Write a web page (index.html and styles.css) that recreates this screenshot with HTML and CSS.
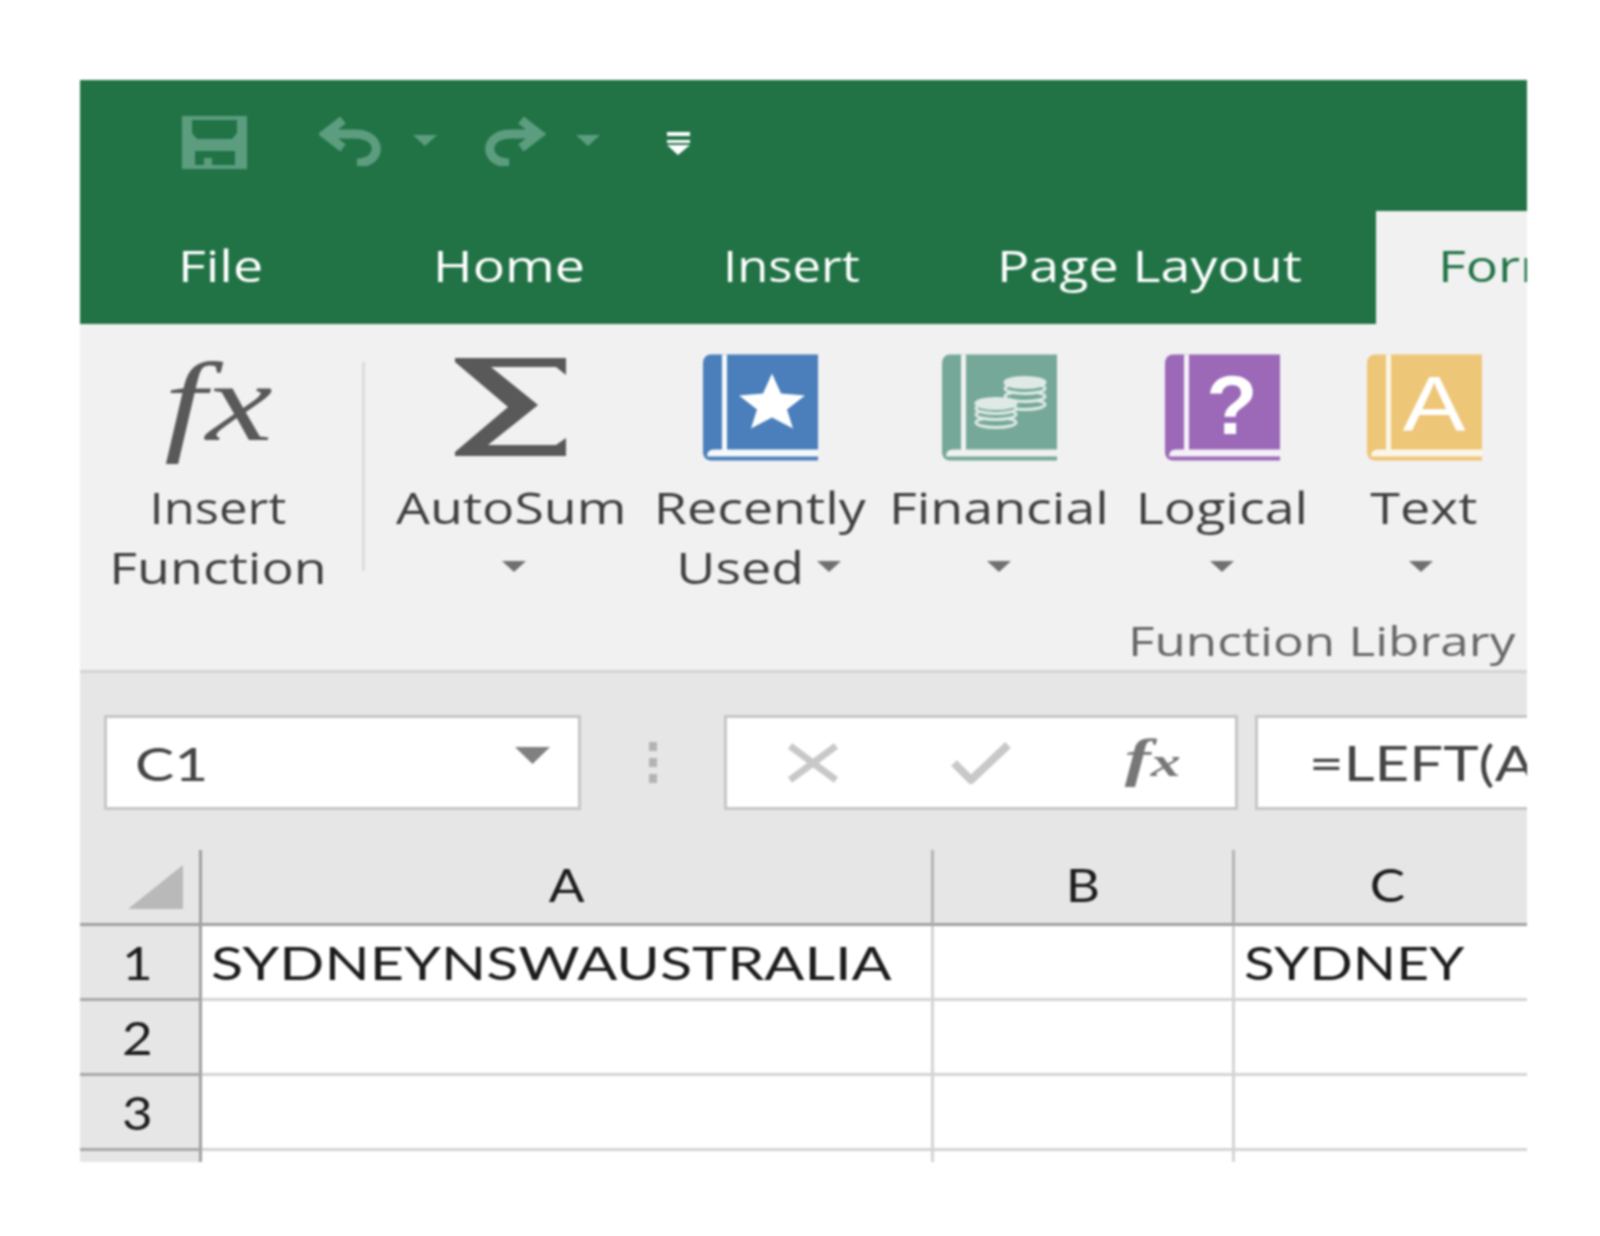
FILE: index.html
```html
<!DOCTYPE html>
<html lang="en">
<head>
    <meta charset="UTF-8">
    <title>Excel Formulas Ribbon</title>
    <link rel="stylesheet" href="styles.css">
</head>
<body>
    <div class="app">
        <!-- Quick access toolbar -->
        <div class="qat">
            <svg class="qat-save" viewBox="0 0 65 53" width="65" height="53"><path fill-rule="evenodd" d="M0 0h65v53H0z M10 4v13l5 6h35l5-6V4z M13 35v14h9v-7h8v7h23V35z" fill="#5c9d7f"/></svg>
            <svg class="qat-undo" viewBox="0 0 64 50" width="64" height="50"><path d="M24 4L6 18l18 14M6 18h30c28 0 28 29 2 29" fill="none" stroke="#5c9d7f" stroke-width="9"/></svg>
            <svg class="qat-caret" viewBox="0 0 24 11" width="24" height="11"><path d="M0 0h24L12 11z" fill="#5c9d7f"/></svg>
            <svg class="qat-redo" viewBox="0 0 66 50" width="66" height="50"><path d="M40 4l18 14-18 14M58 18H30C2 18 2 47 28 47" fill="none" stroke="#5c9d7f" stroke-width="9"/></svg>
            <svg class="qat-caret qat-caret-redo" viewBox="0 0 24 11" width="24" height="11"><path d="M0 0h24L12 11z" fill="#5c9d7f"/></svg>
            <svg class="qat-more" viewBox="0 0 25 24" width="27" height="24"><path d="M1 1h23v4H1zM1 9h23v3H1zM1 14h23L12 24z" fill="#fff"/></svg>
        </div>

        <!-- Tabs -->
        <div class="tabs">
            <div class="tab tab-file"><span class="wide">File</span></div>
            <div class="tab tab-home"><span class="wide">Home</span></div>
            <div class="tab tab-insert"><span class="wide wide-short">Insert</span></div>
            <div class="tab tab-layout"><span class="wide">Page Layout</span></div>
            <div class="tab tab-active"><span class="wide">Formulas</span></div>
        </div>

        <!-- Ribbon -->
        <div class="ribbon">
            <div class="ribbon-row">
                <div class="rb rb-fn">
                    <div class="rb-icon fx-big"><span>fx</span></div>
                    <div class="rb-label"><span class="wide-c wide-short">Insert</span><br><span class="wide-c">Function</span></div>
                </div>
                <div class="rb-sep"></div>
                <div class="rb rb-sum">
                    <svg class="rb-icon" viewBox="0 0 114 107" width="114" height="107"><path d="M1 4h111v17l-10-8H37l47 38-50 40h68l10-7v18H1v-4l53-45L1 8z" fill="#595959"/></svg>
                    <div class="rb-label"><span class="wide-c">AutoSum</span><br><span class="caret caret-sum"></span></div>
                </div>
                <div class="rb rb-recent">
                    <svg class="rb-icon" viewBox="0 0 115 106" width="115" height="106">
                        <path d="M8 0h107v106H8a8 8 0 0 1-8-8V8a8 8 0 0 1 8-8z" fill="#4a7fbb"/>
                        <path d="M19 0h5v95h91v7H4q0-7 7-7h8z" fill="#f6f9fc"/>
                        <path d="M69 19l9 20 24 2-18 14 6 19-21-11-21 11 6-19-18-14 24-2z" fill="#fff"/>
                    </svg>
                    <div class="rb-label"><span class="wide-c">Recently</span><br><span class="wide-c used">Used</span> <span class="caret caret-inline"></span></div>
                </div>
                <div class="rb rb-fin">
                    <svg class="rb-icon" viewBox="0 0 115 106" width="115" height="106">
                        <path d="M8 0h107v106H8a8 8 0 0 1-8-8V8a8 8 0 0 1 8-8z" fill="#75a898"/>
                        <path d="M19 0h5v95h91v7H4q0-7 7-7h8z" fill="#f1f1f1"/>
                        <g fill="#75a898" stroke="#dfeae6" stroke-width="3">
                            <ellipse cx="83" cy="50" rx="20" ry="5"/><ellipse cx="83" cy="42" rx="20" ry="5"/><ellipse cx="83" cy="34" rx="20" ry="5"/>
                            <ellipse cx="83" cy="28" rx="20" ry="5" fill="#dfeae6"/>
                            <ellipse cx="54" cy="68" rx="20" ry="5"/><ellipse cx="54" cy="60" rx="20" ry="5"/><ellipse cx="54" cy="54" rx="20" ry="5"/>
                            <ellipse cx="54" cy="49" rx="20" ry="5" fill="#dfeae6"/>
                        </g>
                    </svg>
                    <div class="rb-label"><span class="wide-c">Financial</span><br><span class="caret"></span></div>
                </div>
                <div class="rb rb-logical">
                    <svg class="rb-icon" viewBox="0 0 115 106" width="115" height="106">
                        <path d="M8 0h107v106H8a8 8 0 0 1-8-8V8a8 8 0 0 1 8-8z" fill="#9b69b7"/>
                        <path d="M19 0h5v95h91v7H4q0-7 7-7h8z" fill="#f6f0f9"/>
                        <text class="book-letter book-q" x="67" y="79">?</text>
                    </svg>
                    <div class="rb-label"><span class="wide-c">Logical</span><br><span class="caret"></span></div>
                </div>
                <div class="rb rb-text">
                    <svg class="rb-icon" viewBox="0 0 115 106" width="115" height="106">
                        <path d="M8 0h107v106H8a8 8 0 0 1-8-8V8a8 8 0 0 1 8-8z" fill="#eec677"/>
                        <path d="M19 0h5v95h91v7H4q0-7 7-7h8z" fill="#fbf6ea"/>
                        <text class="book-letter book-a" transform="translate(67 76) scale(1.22 1)">A</text>
                    </svg>
                    <div class="rb-label"><span class="wide-c">Text</span><br><span class="caret caret-text"></span></div>
                </div>
            </div>
            <div class="group-name"><span class="wide-lib">Function Library</span></div>
        </div>

        <!-- Formula bar -->
        <div class="formula-bar">
            <div class="name-box">
                <span class="wide-name">C1</span>
                <svg viewBox="0 0 35 17" width="35" height="17"><path d="M0 0h35L17.500 17z" fill="#808080"/></svg>
            </div>
            <div class="grip"><i></i><i></i><i></i></div>
            <div class="fx-box">
                <svg viewBox="0 0 54 40" width="54" height="40"><path d="M4 3l46 34M50 3L4 37" fill="none" stroke="#c8c8c8" stroke-width="7"/></svg>
                <svg viewBox="0 0 60 42" width="60" height="42"><path d="M3 21l17 17L57 3" fill="none" stroke="#c8c8c8" stroke-width="8"/></svg>
                <span class="fx-small">f<small>x</small></span>
            </div>
            <div class="formula-input"><span class="wide">=LEFT(A1,6)</span></div>
        </div>

        <!-- Sheet -->
        <div class="sheet">
            <div class="corner"><svg viewBox="0 0 55 44" width="55" height="44"><path d="M55 0v44H0z" fill="#b9b9b9"/></svg></div>
            <div class="col-head"><span class="wide-head">A</span></div>
            <div class="col-head"><span class="wide-head">B</span></div>
            <div class="col-head col-last"><span class="wide-head">C</span></div>

            <div class="row-head"><span class="wide-head">1</span></div>
            <div class="cell"><span class="wide wide-long">SYDNEYNSWAUSTRALIA</span></div>
            <div class="cell"></div>
            <div class="cell cell-last"><span class="wide wide-city">SYDNEY</span></div>

            <div class="row-head"><span class="wide-head">2</span></div>
            <div class="cell"></div>
            <div class="cell"></div>
            <div class="cell cell-last"></div>

            <div class="row-head"><span class="wide-head">3</span></div>
            <div class="cell"></div>
            <div class="cell"></div>
            <div class="cell cell-last"></div>

            <div class="row-head"></div>
            <div class="cell"></div>
            <div class="cell"></div>
            <div class="cell cell-last"></div>
        </div>
    </div>
</body>
</html>
```

FILE: styles.css
```css
body {
    margin: 0;
    padding: 80px 0 0 80px;
    height: 1156px;
    background: #fff;
    font-family: "Open Sans", "Liberation Sans", sans-serif;
    overflow: hidden;
}

.app {
    width: 1447px;
    height: 1082px;
    display: flex;
    flex-direction: column;
    overflow: hidden;
    filter: blur(0.9px);
}

/* The source is a stretched screenshot, so its text runs wider than the font */
.wide,
.wide-c,
.wide-lib,
.wide-name,
.wide-head {
    display: inline-block;
}

.wide {
    transform: scaleX(1.25);
    transform-origin: left center;
}

.wide-c {
    transform: scaleX(1.25);
    transform-origin: center;
}

.wide-short { transform: scaleX(1.18); }
.wide-long { transform: scaleX(1.262); }
.wide-city { transform: scaleX(1.21); }

.wide-lib {
    transform: scaleX(1.28);
    transform-origin: left center;
}

.wide-name {
    transform: scaleX(1.25);
    transform-origin: left center;
}

.wide-head {
    transform: scaleX(1.15);
    transform-origin: center;
}

/* Quick access toolbar */
.qat {
    height: 131px;
    flex: none;
    background: #217346;
    display: flex;
    align-items: flex-start;
    padding-left: 102px;
    box-sizing: border-box;
}

.qat-save { margin-top: 36px; }
.qat-undo { margin: 36px 0 0 72px; }
.qat-caret { margin: 55px 0 0 30px; }
.qat-redo { margin: 36px 0 0 44px; }
.qat-caret-redo { margin-left: 29px; }
.qat-more { margin: 51px 0 0 65px; }

/* Tabs */
.tabs {
    height: 113px;
    flex: none;
    background: #217346;
    display: flex;
    padding-left: 98px;
    box-sizing: border-box;
}

.tab {
    flex: none;
    color: #fff;
    font-size: 43px;
    line-height: 110px;
    white-space: nowrap;
}

.tab-file { width: 255px; }
.tab-home { width: 290px; }
.tab-insert { width: 274px; }
.tab-layout { width: 379px; }

.tab-active {
    flex: 1;
    background: #f1f1f1;
    color: #217346;
    padding-left: 62px;
}

/* Ribbon */
.ribbon {
    height: 349px;
    flex: none;
    box-sizing: border-box;
    background: #f1f1f1;
    border-bottom: 3px solid #d4d4d4;
    position: relative;
}

.ribbon-row {
    display: flex;
    padding-top: 30px;
}

.rb {
    flex: none;
    display: flex;
    flex-direction: column;
    align-items: center;
}

.rb-icon {
    height: 107px;
    flex: none;
}

.rb-label {
    margin-top: 17px;
    font-size: 43px;
    line-height: 60px;
    color: #3f3f3f;
    text-align: center;
    white-space: nowrap;
}

.rb-fn { width: 276px; }
.rb-sum { width: 280px; }
.rb-recent { width: 218px; }
.rb-fin { width: 260px; }
.rb-logical { width: 186px; }
.rb-text { width: 218px; }

.rb-sep {
    flex: none;
    width: 3px;
    height: 209px;
    margin: 8px 6px 0 6px;
    background: #dcdcdc;
}

.fx-big {
    font-family: "Liberation Serif", serif;
    font-style: italic;
    font-size: 112px;
    line-height: 96px;
    color: #595959;
}

.fx-big span {
    display: inline-block;
    transform: scaleX(1.34);
}

.caret {
    display: inline-block;
    width: 0;
    height: 0;
    border-left: 12px solid transparent;
    border-right: 12px solid transparent;
    border-top: 11px solid #707070;
    vertical-align: 12px;
}

.caret-sum { margin-left: 6px; }
.caret-text { margin-right: 6px; }
.caret-inline { margin-left: 14px; }
.used { margin-left: 10px; }

.book-letter {
    font-family: "Liberation Sans", sans-serif;
    text-anchor: middle;
    fill: #fff;
}

.book-q {
    font-size: 84px;
    font-weight: bold;
}

.book-a {
    font-size: 77px;
}

.group-name {
    position: absolute;
    left: 1048px;
    top: 290px;
    font-size: 40px;
    line-height: 54px;
    color: #666;
    white-space: nowrap;
}

/* Formula bar */
.formula-bar {
    height: 177px;
    flex: none;
    box-sizing: border-box;
    background: #e6e6e6;
    padding: 42px 0 40px 24px;
    display: flex;
}

.name-box,
.fx-box,
.formula-input {
    box-sizing: border-box;
    height: 95px;
    flex: none;
    background: #fff;
    border: 3px solid #c6c6c6;
    display: flex;
    align-items: center;
}

.name-box {
    width: 477px;
    padding: 0 28px 0 28px;
    justify-content: space-between;
    font-family: "Lato", sans-serif;
    font-size: 47px;
    color: #444;
}

.name-box svg { margin-bottom: 14px; }

.grip {
    width: 143px;
    flex: none;
    display: flex;
    flex-direction: column;
    justify-content: center;
    align-items: center;
    gap: 7px;
}

.grip i {
    width: 8px;
    height: 9px;
    background: #b4b4b4;
}

.fx-box {
    width: 514px;
    padding-left: 59px;
    gap: 111px;
}

.fx-small {
    font-family: "Liberation Serif", serif;
    font-style: italic;
    font-weight: bold;
    font-size: 52px;
    line-height: 60px;
    color: #777;
    margin: 0 0 4px 12px;
    display: inline-block;
    transform: scaleX(1.5);
}

.fx-small small {
    font-size: 40px;
}

.formula-input {
    width: 400px;
    margin-left: 17px;
    padding-left: 51px;
    font-family: "Lato", sans-serif;
    font-size: 48px;
    color: #444;
    white-space: nowrap;
    overflow: hidden;
}

/* Sheet */
.sheet {
    flex: 1;
    min-height: 0;
    background: #e6e6e6;
    display: grid;
    grid-template-columns: 122px 732px 301px 304px;
    grid-template-rows: 76px 75px 75px 75px 75px;
    font-family: "Lato", sans-serif;
    color: #1c1c1c;
}

.corner,
.col-head,
.row-head,
.cell {
    box-sizing: border-box;
    border-bottom: 3px solid #d4d4d4;
    border-right: 3px solid #d4d4d4;
    white-space: nowrap;
    display: flex;
    align-items: center;
}

.corner {
    border-right-color: #a0a0a0;
    border-bottom-color: #a0a0a0;
    justify-content: flex-end;
    align-items: flex-end;
    padding: 0 16px 14px 0;
}

.col-head {
    justify-content: center;
    font-size: 46px;
    padding-bottom: 4px;
    border-right-color: #b4b4b4;
    border-bottom-color: #a0a0a0;
}

.row-head {
    justify-content: center;
    padding-right: 4px;
    font-size: 46px;
    border-right-color: #a0a0a0;
    border-bottom-color: #a8a8a8;
}

.cell {
    background: #fff;
    padding-left: 9px;
    font-size: 47px;
}

.col-last,
.cell-last { border-right: 0; }
```
